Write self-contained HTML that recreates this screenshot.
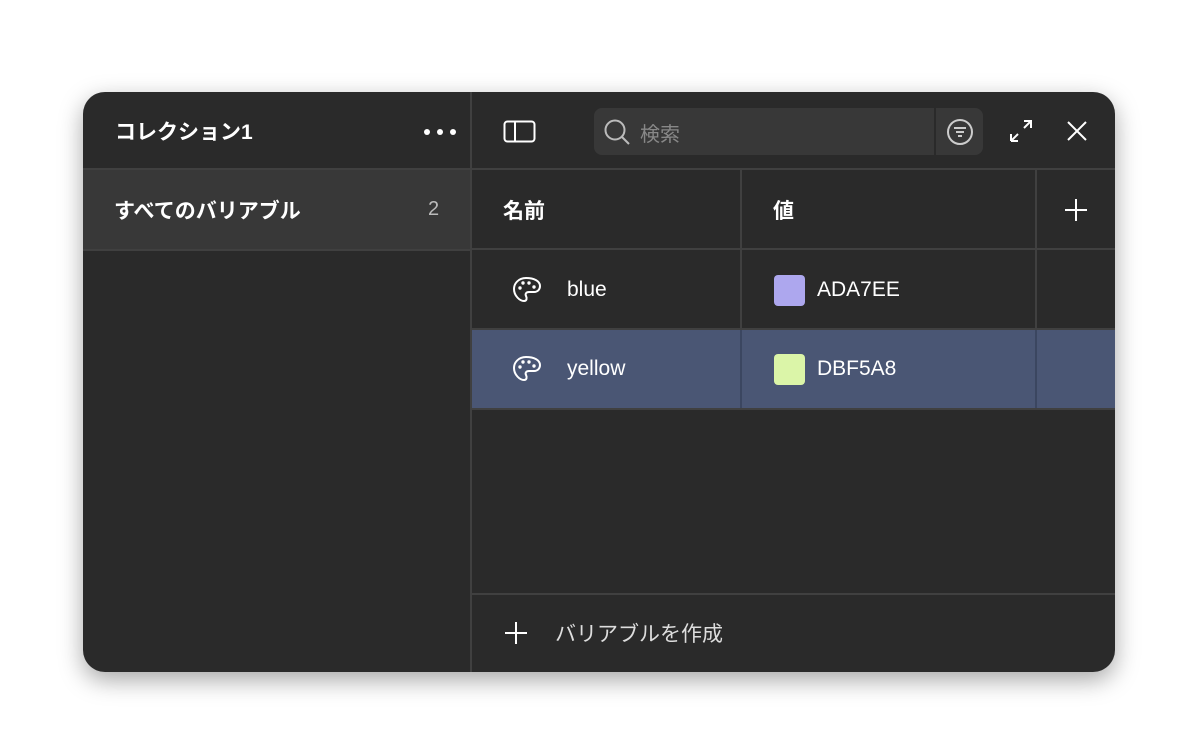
<!DOCTYPE html>
<html><head><meta charset="utf-8"><style>
*{margin:0;padding:0;box-sizing:border-box}
body{width:1200px;height:747px;background:#fff;font-family:"Liberation Sans","Noto Sans CJK JP",sans-serif;position:relative;overflow:hidden}
.p{position:absolute;left:83px;top:92px;width:1032px;height:580px;background:#2a2a2a;border-radius:22px;overflow:hidden;box-shadow:0 8px 24px rgba(0,0,0,.35)}
.a{position:absolute}
.t{color:#fff;font-size:21px;font-weight:bold}
.hl{position:absolute;background:#404040;height:2px}
.vl{position:absolute;background:#404040;width:2px}
</style></head><body>
<div class="p">
 <div class="vl" style="left:387px;top:0;height:580px"></div>
 <div class="hl" style="left:0;top:76px;width:1032px"></div>
 <div class="a t" style="left:32px;top:24px">コレクション1</div>
 <svg class="a" style="left:340px;top:36px" width="34" height="8"><circle cx="4" cy="4" r="3" fill="#fff"/><circle cx="17" cy="4" r="3" fill="#fff"/><circle cx="30" cy="4" r="3" fill="#fff"/></svg>
 <div class="a" style="left:0;top:78px;width:387px;height:79px;background:#383838"></div>
 <div class="hl" style="left:0;top:157px;width:387px"></div>
 <div class="a t" style="left:31px;top:103px">すべてのバリアブル</div>
 <div class="a" style="left:345px;top:106px;color:#bbb;font-size:20px">2</div>
 <svg class="a" style="left:420px;top:28px" width="34" height="24"><rect x="1.5" y="1.5" width="30" height="20" rx="3" fill="none" stroke="#fff" stroke-width="2"/><line x1="12" y1="2" x2="12" y2="21" stroke="#fff" stroke-width="2"/></svg>
 <div class="a" style="left:511px;top:16px;width:389px;height:47px;background:#383838;border-radius:8px"></div>
 <div class="vl" style="left:851px;top:16px;height:47px;background:#2a2a2a"></div>
 <svg class="a" style="left:520px;top:26px" width="30" height="30"><circle cx="12" cy="12" r="9.5" fill="none" stroke="#bbb" stroke-width="2"/><line x1="19" y1="19" x2="26" y2="26" stroke="#bbb" stroke-width="2"/></svg>
 <div class="a" style="left:557px;top:26px;color:#888;font-size:20px">検索</div>
 <svg class="a" style="left:862px;top:25px" width="30" height="30"><circle cx="15" cy="15" r="12" fill="none" stroke="#ccc" stroke-width="2"/><line x1="9" y1="11" x2="21" y2="11" stroke="#ccc" stroke-width="2"/><line x1="11" y1="15" x2="19" y2="15" stroke="#ccc" stroke-width="2"/><line x1="13" y1="19" x2="17" y2="19" stroke="#ccc" stroke-width="2"/></svg>
 <svg class="a" style="left:925px;top:26px" width="28" height="26"><path d="M16 3h7v7M23 3l-7 7M3 23v-7M3 23h7M3 23l7-7" fill="none" stroke="#fff" stroke-width="2"/></svg>
 <svg class="a" style="left:982px;top:27px" width="24" height="24"><path d="M3 3l18 18M21 3L3 21" stroke="#fff" stroke-width="2"/></svg>
 <div class="vl" style="left:657px;top:78px;height:238px"></div>
 <div class="vl" style="left:952px;top:78px;height:238px"></div>
 <div class="hl" style="left:389px;top:156px;width:643px"></div>
 <div class="a" style="left:389px;top:238px;width:643px;height:78px;background:#4a5674"></div>
 <div class="vl" style="left:657px;top:238px;height:78px;background:#3b4660"></div>
 <div class="vl" style="left:952px;top:238px;height:78px;background:#3b4660"></div>
 <div class="hl" style="left:389px;top:236px;width:643px"></div>
 <div class="hl" style="left:389px;top:316px;width:643px"></div>
 <div class="a t" style="left:420px;top:103px">名前</div>
 <div class="a t" style="left:690px;top:103px">値</div>
 <svg class="a" style="left:981px;top:106px" width="24" height="24"><path d="M12 1v22M1 12h22" stroke="#fff" stroke-width="2"/></svg>
 <svg class="a" style="left:429px;top:184px" width="30" height="28" viewBox="0 0 30 28"><path d="M14 2C6 2 2 8 2 13c0 7 6 12 10 12 3 0 3-3 2-5-1-2 0-4 3-4h5c4 0 6-3 6-6 0-5-6-8-14-8z" fill="none" stroke="#fff" stroke-width="2"/><circle cx="8" cy="12" r="1.7" fill="#fff"/><circle cx="11" cy="7" r="1.7" fill="#fff"/><circle cx="17" cy="7" r="1.7" fill="#fff"/><circle cx="22" cy="11" r="1.7" fill="#fff"/></svg>
 <svg class="a" style="left:429px;top:263px" width="30" height="28" viewBox="0 0 30 28"><path d="M14 2C6 2 2 8 2 13c0 7 6 12 10 12 3 0 3-3 2-5-1-2 0-4 3-4h5c4 0 6-3 6-6 0-5-6-8-14-8z" fill="none" stroke="#fff" stroke-width="2"/><circle cx="8" cy="12" r="1.7" fill="#fff"/><circle cx="11" cy="7" r="1.7" fill="#fff"/><circle cx="17" cy="7" r="1.7" fill="#fff"/><circle cx="22" cy="11" r="1.7" fill="#fff"/></svg>
 <div class="a" style="left:484px;top:186px;color:#fff;font-size:21px">blue</div>
 <div class="a" style="left:484px;top:265px;color:#fff;font-size:21px">yellow</div>
 <div class="a" style="left:691px;top:183px;width:31px;height:31px;border-radius:4px;background:#ada7ee"></div>
 <div class="a" style="left:691px;top:262px;width:31px;height:31px;border-radius:4px;background:#dbf5a8"></div>
 <div class="a" style="left:734px;top:186px;color:#fff;font-size:21px">ADA7EE</div>
 <div class="a" style="left:734px;top:265px;color:#fff;font-size:21px">DBF5A8</div>
 <div class="hl" style="left:389px;top:501px;width:643px"></div>
 <svg class="a" style="left:421px;top:529px" width="24" height="24"><path d="M12 1v22M1 12h22" stroke="#fff" stroke-width="2"/></svg>
 <div class="a" style="left:472px;top:526px;color:#ddd;font-size:21px">バリアブルを作成</div>
</div>
</body></html>
